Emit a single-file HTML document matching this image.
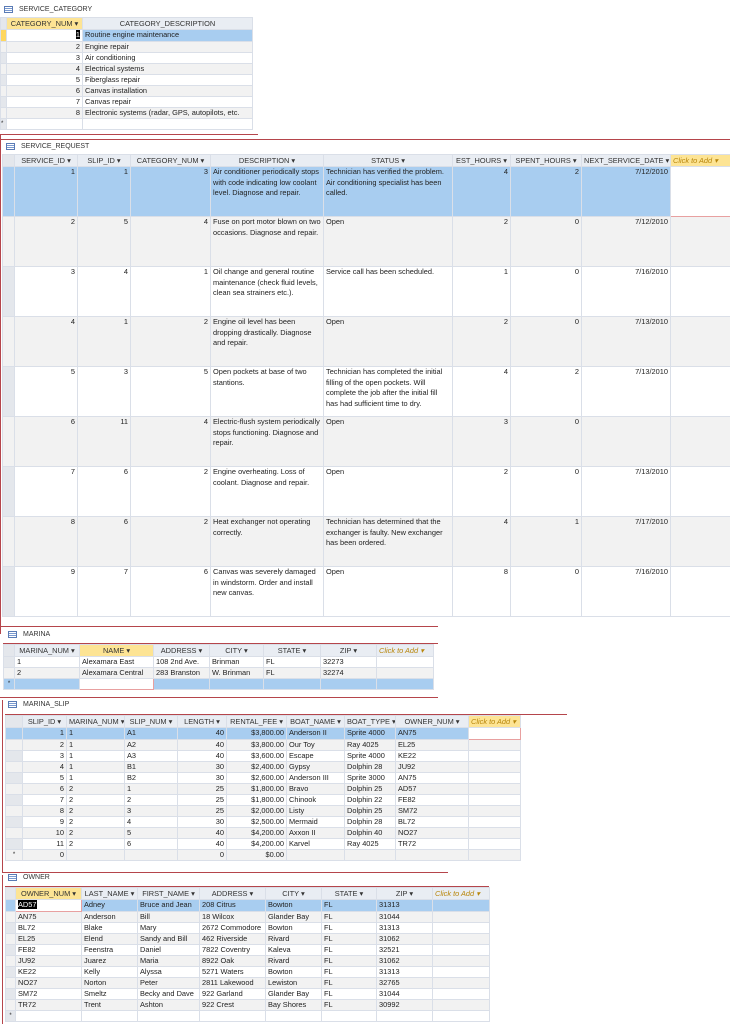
<!DOCTYPE html><html><head><meta charset="utf-8"><style>
*{margin:0;padding:0;box-sizing:border-box}
body{width:730px;height:1024px;background:#fff;position:relative;overflow:hidden;font-family:"Liberation Sans",sans-serif;color:#222}
table{position:absolute;border-collapse:collapse;table-layout:fixed;font-size:7.4px}
td,th{border:1px solid #dadfe8;padding:0 2px;overflow:hidden;white-space:nowrap;font-weight:normal;line-height:10px}
th{background:#e9edf3;color:#333;text-align:center;height:12px;position:relative}
th.y{background:#fde494}
th.a{color:#b8860b;font-style:italic;text-align:left}
td.s,th.s{background:#e4e7ec;padding:0}
td.sy{background:#ffd75e;padding:0}
.r{text-align:right}
tr.g td{background:#f2f2f2}
tr.b td{background:#a8cdf0}
.title{position:absolute;font-size:7px;color:#333;display:flex;align-items:center}
.ic{display:inline-block;width:9px;height:7px;border:1px solid #5a7bb5;background:repeating-linear-gradient(#fff 0 1px,#7a9ad0 1px 2px);margin-right:6px}
.red{position:absolute;background:#b5454b}
.sr td{vertical-align:top;white-space:normal;height:50px;line-height:10.5px}
</style></head><body>

<!-- SERVICE_CATEGORY -->
<div class="title" style="left:4px;top:6px"><span class="ic"></span>SERVICE_CATEGORY</div>
<table style="left:0;top:17px;width:252px">
<col style="width:6px"><col style="width:76px"><col style="width:170px">
<tr><th class="s"></th><th class="y">CATEGORY_NUM ▾</th><th>CATEGORY_DESCRIPTION</th></tr>
<tr style="height:11.5px"><td class="sy"></td><td class="r"><span style="background:#000;color:#fff">1</span></td><td style="background:#a8cdf0">Routine engine maintenance</td></tr>
<tr class="g"><td class="s"></td><td class="r">2</td><td>Engine repair</td></tr>
<tr><td class="s"></td><td class="r">3</td><td>Air conditioning</td></tr>
<tr class="g"><td class="s"></td><td class="r">4</td><td>Electrical systems</td></tr>
<tr><td class="s"></td><td class="r">5</td><td>Fiberglass repair</td></tr>
<tr class="g"><td class="s"></td><td class="r">6</td><td>Canvas installation</td></tr>
<tr><td class="s"></td><td class="r">7</td><td>Canvas repair</td></tr>
<tr class="g"><td class="s"></td><td class="r">8</td><td>Electronic systems (radar, GPS, autopilots, etc.</td></tr>
<tr><td class="s" style="font-size:6px">*</td><td></td><td></td></tr>
</table>
<div class="red" style="left:0;top:134px;width:258px;height:1px"></div>
<div class="red" style="left:0;top:134px;width:1px;height:500px"></div>
<div class="red" style="left:0;top:139px;width:730px;height:1px"></div>

<!-- SERVICE_REQUEST -->
<div class="title" style="left:6px;top:143px"><span class="ic"></span>SERVICE_REQUEST</div>
<table class="sr" style="left:2px;top:154px;width:728px">
<col style="width:12px"><col style="width:63px"><col style="width:53px"><col style="width:80px"><col style="width:113px"><col style="width:129px"><col style="width:58px"><col style="width:71px"><col style="width:89px"><col style="width:60px">
<tr><th class="s"></th><th>SERVICE_ID ▾</th><th>SLIP_ID ▾</th><th>CATEGORY_NUM ▾</th><th>DESCRIPTION ▾</th><th>STATUS ▾</th><th>EST_HOURS ▾</th><th>SPENT_HOURS ▾</th><th>NEXT_SERVICE_DATE ▾</th><th class="a" style="background:#fde494">Click to Add ▾</th></tr>
<tr class="b"><td class="sy"></td><td class="r">1</td><td class="r">1</td><td class="r">3</td><td>Air conditioner periodically stops with code indicating low coolant level. Diagnose and repair.</td><td>Technician has verified the problem. Air conditioning specialist has been called.</td><td class="r">4</td><td class="r">2</td><td class="r">7/12/2010</td><td style="background:#fff;border:1px solid #e8a0a0"></td></tr>
<tr class="g"><td class="s"></td><td class="r">2</td><td class="r">5</td><td class="r">4</td><td>Fuse on port motor blown on two occasions. Diagnose and repair.</td><td>Open</td><td class="r">2</td><td class="r">0</td><td class="r">7/12/2010</td><td></td></tr>
<tr><td class="s"></td><td class="r">3</td><td class="r">4</td><td class="r">1</td><td>Oil change and general routine maintenance (check fluid levels, clean sea strainers etc.).</td><td>Service call has been scheduled.</td><td class="r">1</td><td class="r">0</td><td class="r">7/16/2010</td><td></td></tr>
<tr class="g"><td class="s"></td><td class="r">4</td><td class="r">1</td><td class="r">2</td><td>Engine oil level has been dropping drastically. Diagnose and repair.</td><td>Open</td><td class="r">2</td><td class="r">0</td><td class="r">7/13/2010</td><td></td></tr>
<tr><td class="s"></td><td class="r">5</td><td class="r">3</td><td class="r">5</td><td>Open pockets at base of two stantions.</td><td><div style="height:48px;overflow:hidden">Technician has completed the initial filling of the open pockets. Will complete the job after the initial fill has had sufficient time to dry.</div></td><td class="r">4</td><td class="r">2</td><td class="r">7/13/2010</td><td></td></tr>
<tr class="g"><td class="s"></td><td class="r">6</td><td class="r">11</td><td class="r">4</td><td>Electric-flush system periodically stops functioning. Diagnose and repair.</td><td>Open</td><td class="r">3</td><td class="r">0</td><td class="r"></td><td></td></tr>
<tr><td class="s"></td><td class="r">7</td><td class="r">6</td><td class="r">2</td><td>Engine overheating. Loss of coolant. Diagnose and repair.</td><td>Open</td><td class="r">2</td><td class="r">0</td><td class="r">7/13/2010</td><td></td></tr>
<tr class="g"><td class="s"></td><td class="r">8</td><td class="r">6</td><td class="r">2</td><td>Heat exchanger not operating correctly.</td><td>Technician has determined that the exchanger is faulty. New exchanger has been ordered.</td><td class="r">4</td><td class="r">1</td><td class="r">7/17/2010</td><td></td></tr>
<tr><td class="s"></td><td class="r">9</td><td class="r">7</td><td class="r">6</td><td>Canvas was severely damaged in windstorm. Order and install new canvas.</td><td>Open</td><td class="r">8</td><td class="r">0</td><td class="r">7/16/2010</td><td></td></tr>
</table>

<!-- MARINA -->
<div class="red" style="left:0;top:626px;width:438px;height:1px"></div>
<div class="title" style="left:8px;top:631px"><span class="ic"></span>MARINA</div>
<div class="red" style="left:3px;top:643px;width:435px;height:1px"></div>
<table style="left:3px;top:644px;width:430px">
<col style="width:11px"><col style="width:65px"><col style="width:74px"><col style="width:56px"><col style="width:54px"><col style="width:57px"><col style="width:56px"><col style="width:57px">
<tr><th class="s"></th><th>MARINA_NUM ▾</th><th class="y">NAME ▾</th><th>ADDRESS ▾</th><th>CITY ▾</th><th>STATE ▾</th><th>ZIP ▾</th><th class="a">Click to Add ▾</th></tr>
<tr><td class="s"></td><td>1</td><td>Alexamara East</td><td>108 2nd Ave.</td><td>Brinman</td><td>FL</td><td>32273</td><td></td></tr>
<tr class="g"><td class="s"></td><td>2</td><td>Alexamara Central</td><td>283 Branston</td><td>W. Brinman</td><td>FL</td><td>32274</td><td></td></tr>
<tr class="b"><td class="sy" style="font-size:6px;text-align:center">*</td><td></td><td style="background:#fff;border:1px solid #e8a0a0"></td><td></td><td></td><td></td><td></td><td></td></tr>
</table>
<div class="red" style="left:0;top:697px;width:438px;height:1px"></div>

<!-- MARINA_SLIP -->
<div class="title" style="left:8px;top:701px"><span class="ic"></span>MARINA_SLIP</div>
<div class="red" style="left:5px;top:714px;width:562px;height:1px"></div>
<div class="red" style="left:2px;top:700px;width:1px;height:172px"></div>
<table style="left:5px;top:715px;width:515px">
<col style="width:17px"><col style="width:44px"><col style="width:58px"><col style="width:53px"><col style="width:49px"><col style="width:60px"><col style="width:58px"><col style="width:51px"><col style="width:73px"><col style="width:52px">
<tr><th class="s"></th><th>SLIP_ID ▾</th><th>MARINA_NUM ▾</th><th>SLIP_NUM ▾</th><th>LENGTH ▾</th><th>RENTAL_FEE ▾</th><th>BOAT_NAME ▾</th><th>BOAT_TYPE ▾</th><th>OWNER_NUM ▾</th><th class="a" style="background:#fde494">Click to Add ▾</th></tr>
<tr class="b" style="height:11.7px"><td class="sy"></td><td class="r">1</td><td>1</td><td>A1</td><td class="r">40</td><td class="r">$3,800.00</td><td>Anderson II</td><td>Sprite 4000</td><td>AN75</td><td style="background:#fff;border:1px solid #e8a0a0"></td></tr>
<tr class="g"><td class="s"></td><td class="r">2</td><td>1</td><td>A2</td><td class="r">40</td><td class="r">$3,800.00</td><td>Our Toy</td><td>Ray 4025</td><td>EL25</td><td></td></tr>
<tr><td class="s"></td><td class="r">3</td><td>1</td><td>A3</td><td class="r">40</td><td class="r">$3,600.00</td><td>Escape</td><td>Sprite 4000</td><td>KE22</td><td></td></tr>
<tr class="g"><td class="s"></td><td class="r">4</td><td>1</td><td>B1</td><td class="r">30</td><td class="r">$2,400.00</td><td>Gypsy</td><td>Dolphin 28</td><td>JU92</td><td></td></tr>
<tr><td class="s"></td><td class="r">5</td><td>1</td><td>B2</td><td class="r">30</td><td class="r">$2,600.00</td><td>Anderson III</td><td>Sprite 3000</td><td>AN75</td><td></td></tr>
<tr class="g"><td class="s"></td><td class="r">6</td><td>2</td><td>1</td><td class="r">25</td><td class="r">$1,800.00</td><td>Bravo</td><td>Dolphin 25</td><td>AD57</td><td></td></tr>
<tr><td class="s"></td><td class="r">7</td><td>2</td><td>2</td><td class="r">25</td><td class="r">$1,800.00</td><td>Chinook</td><td>Dolphin 22</td><td>FE82</td><td></td></tr>
<tr class="g"><td class="s"></td><td class="r">8</td><td>2</td><td>3</td><td class="r">25</td><td class="r">$2,000.00</td><td>Listy</td><td>Dolphin 25</td><td>SM72</td><td></td></tr>
<tr><td class="s"></td><td class="r">9</td><td>2</td><td>4</td><td class="r">30</td><td class="r">$2,500.00</td><td>Mermaid</td><td>Dolphin 28</td><td>BL72</td><td></td></tr>
<tr class="g"><td class="s"></td><td class="r">10</td><td>2</td><td>5</td><td class="r">40</td><td class="r">$4,200.00</td><td>Axxon II</td><td>Dolphin 40</td><td>NO27</td><td></td></tr>
<tr><td class="s"></td><td class="r">11</td><td>2</td><td>6</td><td class="r">40</td><td class="r">$4,200.00</td><td>Karvel</td><td>Ray 4025</td><td>TR72</td><td></td></tr>
<tr class="g"><td class="s" style="font-size:6px;text-align:center">*</td><td class="r">0</td><td></td><td></td><td class="r">0</td><td class="r">$0.00</td><td></td><td></td><td></td><td></td></tr>
</table>
<div class="red" style="left:2px;top:872px;width:446px;height:1px"></div>

<!-- OWNER -->
<div class="title" style="left:8px;top:874px"><span class="ic"></span>OWNER</div>
<div class="red" style="left:2px;top:875px;width:1px;height:149px"></div>
<div class="red" style="left:5px;top:886px;width:484px;height:1px"></div>
<table style="left:5px;top:887px;width:484px">
<col style="width:10px"><col style="width:66px"><col style="width:56px"><col style="width:62px"><col style="width:66px"><col style="width:56px"><col style="width:55px"><col style="width:56px"><col style="width:57px">
<tr><th class="s"></th><th class="y">OWNER_NUM ▾</th><th>LAST_NAME ▾</th><th>FIRST_NAME ▾</th><th>ADDRESS ▾</th><th>CITY ▾</th><th>STATE ▾</th><th>ZIP ▾</th><th class="a">Click to Add ▾</th></tr>
<tr class="b" style="height:11.6px"><td class="sy"></td><td style="background:#fff;border:1px solid #e8a0a0"><span style="background:#000;color:#fff">AD57</span></td><td>Adney</td><td>Bruce and Jean</td><td>208 Citrus</td><td>Bowton</td><td>FL</td><td>31313</td><td></td></tr>
<tr class="g"><td class="s"></td><td>AN75</td><td>Anderson</td><td>Bill</td><td>18 Wilcox</td><td>Glander Bay</td><td>FL</td><td>31044</td><td></td></tr>
<tr><td class="s"></td><td>BL72</td><td>Blake</td><td>Mary</td><td>2672 Commodore</td><td>Bowton</td><td>FL</td><td>31313</td><td></td></tr>
<tr class="g"><td class="s"></td><td>EL25</td><td>Elend</td><td>Sandy and Bill</td><td>462 Riverside</td><td>Rivard</td><td>FL</td><td>31062</td><td></td></tr>
<tr><td class="s"></td><td>FE82</td><td>Feenstra</td><td>Daniel</td><td>7822 Coventry</td><td>Kaleva</td><td>FL</td><td>32521</td><td></td></tr>
<tr class="g"><td class="s"></td><td>JU92</td><td>Juarez</td><td>Maria</td><td>8922 Oak</td><td>Rivard</td><td>FL</td><td>31062</td><td></td></tr>
<tr><td class="s"></td><td>KE22</td><td>Kelly</td><td>Alyssa</td><td>5271 Waters</td><td>Bowton</td><td>FL</td><td>31313</td><td></td></tr>
<tr class="g"><td class="s"></td><td>NO27</td><td>Norton</td><td>Peter</td><td>2811 Lakewood</td><td>Lewiston</td><td>FL</td><td>32765</td><td></td></tr>
<tr><td class="s"></td><td>SM72</td><td>Smeltz</td><td>Becky and Dave</td><td>922 Garland</td><td>Glander Bay</td><td>FL</td><td>31044</td><td></td></tr>
<tr class="g"><td class="s"></td><td>TR72</td><td>Trent</td><td>Ashton</td><td>922 Crest</td><td>Bay Shores</td><td>FL</td><td>30992</td><td></td></tr>
<tr><td class="s" style="font-size:6px;text-align:center">*</td><td></td><td></td><td></td><td></td><td></td><td></td><td></td><td></td></tr>
</table>
</body></html>
